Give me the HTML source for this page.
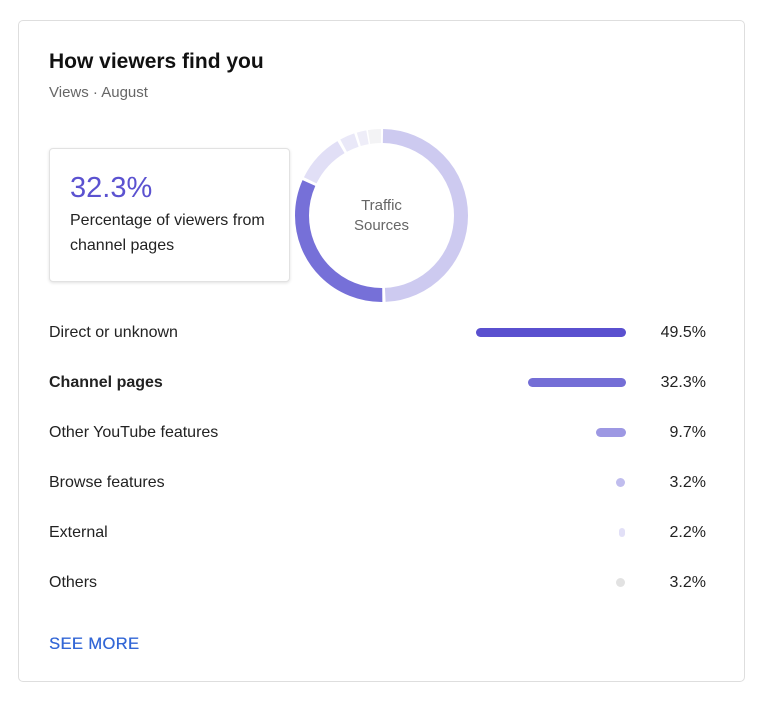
<!DOCTYPE html>
<html><head><meta charset="utf-8"><style>
body{margin:0;width:768px;height:701px;background:#fff;font-family:"Liberation Sans",Arial,sans-serif;position:relative;overflow:hidden;color:#202020}
.card{position:absolute;left:18px;top:20px;width:727px;height:662px;border:1px solid #dedede;border-radius:5px;box-sizing:border-box}
.a{position:absolute;white-space:nowrap}
.t{left:49px;top:50px;font-size:21px;font-weight:bold;color:#111}
.s{left:49px;top:84px;font-size:15px;color:#666}
.box{position:absolute;left:49px;top:148px;width:241px;height:134px;border:1px solid #e2e2e2;border-radius:4px;box-sizing:border-box;box-shadow:0 1px 3px rgba(0,0,0,.12);background:#fff}
.big{left:70px;top:172px;font-size:29px;color:#5b52d0}
.d{font-size:16px;color:#222}
.row{position:absolute;left:49px;font-size:16px;color:#222}
.pct{position:absolute;right:62px;font-size:16px;color:#222;text-align:right}
.bar{position:absolute;height:9px;border-radius:5px}
.sm{left:49px;top:635px;font-size:16.5px;color:#3367d6;letter-spacing:.4px;text-shadow:0.3px 0 0 #3367d6}
</style></head><body>
<div class="card"></div>
<div class="a t">How viewers find you</div>
<div class="a s">Views · August</div>
<div class="box"></div>
<div class="a big">32.3%</div>
<div class="a d" style="left:70px;top:212px">Percentage of viewers from</div>
<div class="a d" style="left:70px;top:237px">channel pages</div>
<svg class="a" style="left:295px;top:129px" width="173" height="173" viewBox="0 0 173 173">
<g transform="rotate(-90 86.5 86.5)" fill="none" stroke-width="14">
<circle cx="86.5" cy="86.5" r="79.5" pathLength="100" stroke="#cdcaf0" stroke-dasharray="49 51" stroke-dashoffset="-0.3"/>
<circle cx="86.5" cy="86.5" r="79.5" pathLength="100" stroke="#7670d8" stroke-dasharray="31.9 68.1" stroke-dashoffset="-49.9"/>
<circle cx="86.5" cy="86.5" r="79.5" pathLength="100" stroke="#e1dff6" stroke-dasharray="9.2 90.8" stroke-dashoffset="-82.4"/>
<circle cx="86.5" cy="86.5" r="79.5" pathLength="100" stroke="#e9e8f8" stroke-dasharray="2.8 97.2" stroke-dashoffset="-92.2"/>
<circle cx="86.5" cy="86.5" r="79.5" pathLength="100" stroke="#eeedf8" stroke-dasharray="1.8 98.2" stroke-dashoffset="-95.5"/>
<circle cx="86.5" cy="86.5" r="79.5" pathLength="100" stroke="#f3f3f5" stroke-dasharray="2.4 97.6" stroke-dashoffset="-97.6"/>
</g>
<text x="86.5" y="81" text-anchor="middle" font-size="15" fill="#666" font-family="Liberation Sans">Traffic</text>
<text x="86.5" y="101" text-anchor="middle" font-size="15" fill="#666" font-family="Liberation Sans">Sources</text>
</svg>
<div class="row" style="top:324px">Direct or unknown</div><div class="bar" style="left:476px;width:150px;top:328px;background:#5a50cf"></div><div class="pct" style="top:324px">49.5%</div>
<div class="row" style="top:374px;font-weight:bold">Channel pages</div><div class="bar" style="left:528px;width:98px;top:378px;background:#746ed6"></div><div class="pct" style="top:374px">32.3%</div>
<div class="row" style="top:424px">Other YouTube features</div><div class="bar" style="left:596px;width:30px;top:428px;background:#9d98e3"></div><div class="pct" style="top:424px">9.7%</div>
<div class="row" style="top:474px">Browse features</div><div class="bar" style="left:616px;width:9px;top:478px;background:#c0bdee"></div><div class="pct" style="top:474px">3.2%</div>
<div class="row" style="top:524px">External</div><div class="bar" style="left:619px;width:6px;top:528px;background:#e2e0f7"></div><div class="pct" style="top:524px">2.2%</div>
<div class="row" style="top:574px">Others</div><div class="bar" style="left:616px;width:9px;top:578px;background:#e2e2e2"></div><div class="pct" style="top:574px">3.2%</div>
<div class="a sm">SEE MORE</div>
</body></html>
